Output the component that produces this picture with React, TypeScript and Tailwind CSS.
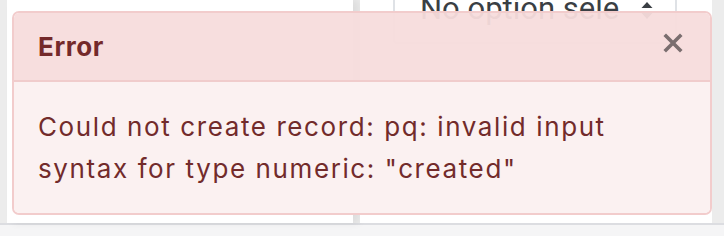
import React from 'react';

const CloseIcon = () => (
  <svg width="20" height="20" viewBox="0 0 20 20" fill="none">
    <path d="M3 3L17 17M17 3L3 17" stroke="#7a6e6f" strokeWidth="3.6" strokeLinecap="square" />
  </svg>
);

const SortArrows = () => (
  <svg width="12" height="20" viewBox="0 0 12 20">
    <path d="M6 2L11.5 8H0.5Z" fill="#3a3f44" />
    <path d="M6 19L11.5 13H0.5Z" fill="#3a3f44" />
  </svg>
);

export default function App() {
  return (
    <div className="relative w-[724px] h-[236px] overflow-hidden bg-[#f5f5f6] font-['Inter',sans-serif]">
      {/* page behind the alert */}
      <div className="flex h-[225px] bg-[#ececec] border-b-2 border-[#dcdde1]">
        <div className="ml-[7px] w-[346px] bg-white shadow-[6px_0_8px_rgba(0,0,0,0.07)]" />
        <div className="ml-[7px] w-[352px] bg-white">
          <div className="ml-[33px] -mt-[10px] w-[284px] h-[54px] border-2 border-t-0 border-[#dfe2e6] rounded-b-[4px] flex items-start pl-[25px] pr-[22px]">
            <span className="flex-1 mt-[1px] text-[31px] leading-[36px] text-[#3a3f44] font-['Roboto',sans-serif] whitespace-nowrap overflow-hidden">
              No option sele
            </span>
            <div className="mt-[10px]">
              <SortArrows />
            </div>
          </div>
        </div>
      </div>

      {/* alert */}
      <div className="absolute left-[12px] top-[11px] w-[700px] h-[204px] rounded-[7px] border-2 border-[#f2cccc] overflow-hidden flex flex-col">
        <div className="h-[69px] shrink-0 bg-[#f7dcdc]/95 border-b-2 border-[#f0cccc] flex items-center justify-between pl-[24px] pr-[27px]">
          <span className="text-[26px] font-bold tracking-[0.6px] text-[#74292a]">Error</span>
          <div className="-mt-[7px]">
            <CloseIcon />
          </div>
        </div>
        <div className="flex-1 bg-[#fbf1f1] pl-[24px] pr-[10px] pt-[24px]">
          <p className="text-[26px] leading-[42px] tracking-[1.6px] text-[#722b2b] whitespace-nowrap">
            Could not create record: pq: invalid input
            <br />
            syntax for type numeric: "created"
          </p>
        </div>
      </div>
    </div>
  );
}
